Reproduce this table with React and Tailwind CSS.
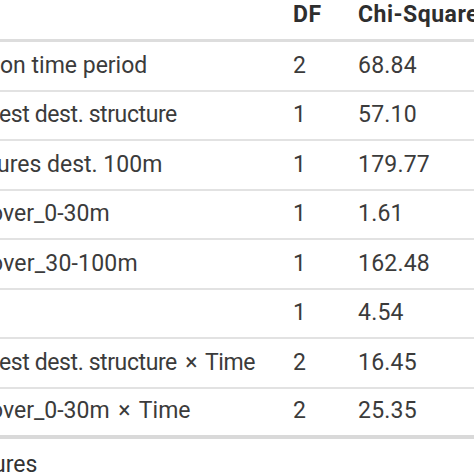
import React from "react";

const X = () => <span className="mx-[3px]">×</span>;

const rows = [
  { label: <>on time period</>, off: "ml-[0px]", tr: "tracking-[0px]", df: "2", chi: "68.84" },
  { label: <>est dest. structure</>, off: "-ml-[1px]", tr: "tracking-[-0.4px]", df: "1", chi: "57.10" },
  { label: <>ures dest. 100m</>, off: "-ml-[3px]", tr: "tracking-[0px]", df: "1", chi: "179.77" },
  { label: <>over_0-30m</>, off: "-ml-[10px]", tr: "tracking-[0px]", df: "1", chi: "1.61" },
  { label: <>over_30-100m</>, off: "-ml-[10px]", tr: "tracking-[0.2px]", df: "1", chi: "162.48" },
  { label: null, off: "", tr: "", df: "1", chi: "4.54" },
  { label: <>est dest. structure <X /> Time</>, off: "-ml-[1px]", tr: "tracking-[-0.4px]", df: "2", chi: "16.45" },
  { label: <>over_0-30m <X /> Time</>, off: "-ml-[10px]", tr: "tracking-[0px]", df: "2", chi: "25.35" },
];

export default function App() {
  return (
    <div
      className="w-[474px] h-[474px] overflow-hidden bg-white text-[#3b3b3b]"
      style={{ fontFamily: "Roboto, 'Noto Sans', sans-serif" }}
    >
      <div className="flex h-[42px] items-center pb-[8px] border-b-[3px] border-[#dddddd] text-[23px] font-bold text-[#2e2e2e] tracking-[0.5px]">
        <div className="w-[293px] shrink-0" />
        <div className="w-[65px] shrink-0">DF</div>
        <div className="whitespace-nowrap">Chi-Square</div>
      </div>
      {rows.map((r, i) => (
        <div
          key={i}
          className={
            "flex items-center text-[23px] " +
            (i === rows.length - 1
              ? "h-[50px] border-b-[4px] border-[#d9d9d9]"
              : "h-[49.5px] border-b-2 border-[#e2e2e2]")
          }
        >
          <div className={"w-[293px] shrink-0 overflow-hidden whitespace-nowrap " + r.tr}>
            <span className={"block " + r.off}>{r.label}</span>
          </div>
          <div className="w-[65px] shrink-0">{r.df}</div>
          <div className="whitespace-nowrap tracking-[0.2px]">{r.chi}</div>
        </div>
      ))}
      <div className="overflow-hidden whitespace-nowrap pt-[9px] text-[23px] text-[#333333]">
        <span className="block -ml-[7px]">ures</span>
      </div>
    </div>
  );
}
